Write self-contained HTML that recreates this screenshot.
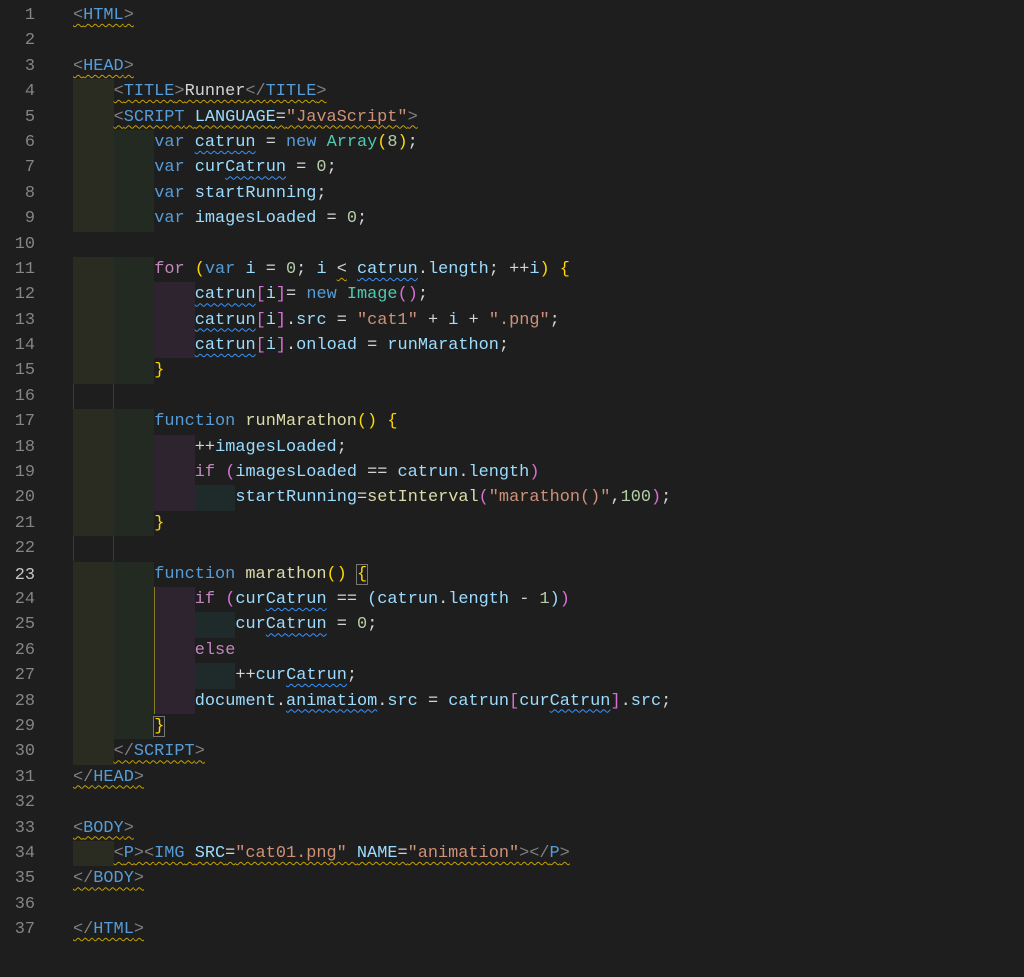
<!DOCTYPE html>
<html><head><meta charset="utf-8"><style>
html,body{margin:0;padding:0;background:#1e1e1e;width:1024px;height:977px;overflow:hidden}
#ed{position:absolute;left:0;top:3px;font-family:"Liberation Mono",monospace;font-size:16.9px;color:#d4d4d4}
.l{position:relative;height:25.4px;line-height:25.4px;white-space:pre}
.ln{position:absolute;left:0;width:35px;text-align:right;color:#858585}
.cd{position:absolute;left:73px;top:0}
.cur{border-top:1px solid #2c2c2c;border-bottom:1px solid #2c2c2c;box-sizing:border-box}
.cur .ln{color:#c6c6c6}
.i{display:inline-block;width:40.6px;height:25.4px;vertical-align:top}
.i1{background:#2b2c21}.i2{background:#232a22}.i3{background:#2d2430}.i4{background:#1f2a2a}
.t{color:#808080}.n{color:#569cd6}.a{color:#9cdcfe}.s{color:#ce9178}.k{color:#569cd6}.v{color:#9cdcfe}
.c{color:#c586c0}.f{color:#dcdcaa}.y{color:#ffd700}.p{color:#da70d6}.num{color:#b5cea8}.cl{color:#4ec9b0}
.w{text-decoration:underline wavy #c5a300;text-decoration-thickness:1px;text-underline-offset:4px}
.b{text-decoration:underline wavy #3794ff;text-decoration-thickness:1px;text-underline-offset:4px}
.g{position:absolute;width:1px;background:#3a3a3a}
.bx{outline:1px solid #777;}
</style></head><body>
<div class="g" style="left:73px;top:257px;height:25px"></div>
<div class="g" style="left:113px;top:257px;height:25px"></div>
<div class="g" style="left:73px;top:384px;height:25px"></div>
<div class="g" style="left:113px;top:384px;height:25px"></div>
<div class="g" style="left:73px;top:536px;height:25px"></div>
<div class="g" style="left:113px;top:536px;height:25px"></div>
<div id="ed">
<div class="l"><span class="ln">1</span><span class="cd"><span class="w"><span class="t">&lt;</span><span class="n">HTML</span><span class="t">&gt;</span></span></span></div>
<div class="l"><span class="ln">2</span></div>
<div class="l"><span class="ln">3</span><span class="cd"><span class="w"><span class="t">&lt;</span><span class="n">HEAD</span><span class="t">&gt;</span></span></span></div>
<div class="l"><span class="ln">4</span><span class="cd"><span class="i i1"></span><span class="w"><span class="t">&lt;</span><span class="n">TITLE</span><span class="t">&gt;</span>Runner<span class="t">&lt;/</span><span class="n">TITLE</span><span class="t">&gt;</span></span></span></div>
<div class="l"><span class="ln">5</span><span class="cd"><span class="i i1"></span><span class="w"><span class="t">&lt;</span><span class="n">SCRIPT</span> <span class="a">LANGUAGE</span>=<span class="s">"JavaScript"</span><span class="t">&gt;</span></span></span></div>
<div class="l"><span class="ln">6</span><span class="cd"><span class="i i1"></span><span class="i i2"></span><span class="k">var</span> <span class="v b">catrun</span> = <span class="k">new</span> <span class="cl">Array</span><span class="y">(</span><span class="num">8</span><span class="y">)</span>;</span></div>
<div class="l"><span class="ln">7</span><span class="cd"><span class="i i1"></span><span class="i i2"></span><span class="k">var</span> <span class="v">cur<span class="b">Catrun</span></span> = <span class="num">0</span>;</span></div>
<div class="l"><span class="ln">8</span><span class="cd"><span class="i i1"></span><span class="i i2"></span><span class="k">var</span> <span class="v">startRunning</span>;</span></div>
<div class="l"><span class="ln">9</span><span class="cd"><span class="i i1"></span><span class="i i2"></span><span class="k">var</span> <span class="v">imagesLoaded</span> = <span class="num">0</span>;</span></div>
<div class="l"><span class="ln">10</span></div>
<div class="l"><span class="ln">11</span><span class="cd"><span class="i i1"></span><span class="i i2"></span><span class="c">for</span> <span class="y">(</span><span class="k">var</span> <span class="v">i</span> = <span class="num">0</span>; <span class="v">i</span> <span class="w">&lt;</span> <span class="v b">catrun</span>.<span class="v">length</span>; ++<span class="v">i</span><span class="y">)</span> <span class="y">{</span></span></div>
<div class="l"><span class="ln">12</span><span class="cd"><span class="i i1"></span><span class="i i2"></span><span class="i i3"></span><span class="v b">catrun</span><span class="p">[</span><span class="v">i</span><span class="p">]</span>= <span class="k">new</span> <span class="cl">Image</span><span class="p">()</span>;</span></div>
<div class="l"><span class="ln">13</span><span class="cd"><span class="i i1"></span><span class="i i2"></span><span class="i i3"></span><span class="v b">catrun</span><span class="p">[</span><span class="v">i</span><span class="p">]</span>.<span class="v">src</span> = <span class="s">"cat1"</span> + <span class="v">i</span> + <span class="s">".png"</span>;</span></div>
<div class="l"><span class="ln">14</span><span class="cd"><span class="i i1"></span><span class="i i2"></span><span class="i i3"></span><span class="v b">catrun</span><span class="p">[</span><span class="v">i</span><span class="p">]</span>.<span class="v">onload</span> = <span class="v">runMarathon</span>;</span></div>
<div class="l"><span class="ln">15</span><span class="cd"><span class="i i1"></span><span class="i i2"></span><span class="y">}</span></span></div>
<div class="l"><span class="ln">16</span></div>
<div class="l"><span class="ln">17</span><span class="cd"><span class="i i1"></span><span class="i i2"></span><span class="k">function</span> <span class="f">runMarathon</span><span class="y">()</span> <span class="y">{</span></span></div>
<div class="l"><span class="ln">18</span><span class="cd"><span class="i i1"></span><span class="i i2"></span><span class="i i3"></span>++<span class="v">imagesLoaded</span>;</span></div>
<div class="l"><span class="ln">19</span><span class="cd"><span class="i i1"></span><span class="i i2"></span><span class="i i3"></span><span class="c">if</span> <span class="p">(</span><span class="v">imagesLoaded</span> == <span class="v">catrun</span>.<span class="v">length</span><span class="p">)</span></span></div>
<div class="l"><span class="ln">20</span><span class="cd"><span class="i i1"></span><span class="i i2"></span><span class="i i3"></span><span class="i i4"></span><span class="v">startRunning</span>=<span class="f">setInterval</span><span class="p">(</span><span class="s">"marathon()"</span>,<span class="num">100</span><span class="p">)</span>;</span></div>
<div class="l"><span class="ln">21</span><span class="cd"><span class="i i1"></span><span class="i i2"></span><span class="y">}</span></span></div>
<div class="l"><span class="ln">22</span></div>
<div class="l cur"><span class="ln">23</span><span class="cd" style="top:-1px"><span class="i i1"></span><span class="i i2"></span><span class="k">function</span> <span class="f">marathon</span><span class="y">()</span> <span class="y bx">{</span></span></div>
<div class="l"><span class="ln">24</span><span class="cd"><span class="i i1"></span><span class="i i2"></span><span class="i i3" style="box-shadow:inset 1px 0 #8a7a20"></span><span class="c">if</span> <span class="p">(</span><span class="v">cur<span class="b">Catrun</span></span> == <span class="v" style="color:#9cdcfe">(</span><span class="v">catrun</span>.<span class="v">length</span> - <span class="num">1</span><span class="v">)</span><span class="p">)</span></span></div>
<div class="l"><span class="ln">25</span><span class="cd"><span class="i i1"></span><span class="i i2"></span><span class="i i3" style="box-shadow:inset 1px 0 #8a7a20"></span><span class="i i4"></span><span class="v">cur<span class="b">Catrun</span></span> = <span class="num">0</span>;</span></div>
<div class="l"><span class="ln">26</span><span class="cd"><span class="i i1"></span><span class="i i2"></span><span class="i i3" style="box-shadow:inset 1px 0 #8a7a20"></span><span class="c">else</span></span></div>
<div class="l"><span class="ln">27</span><span class="cd"><span class="i i1"></span><span class="i i2"></span><span class="i i3" style="box-shadow:inset 1px 0 #8a7a20"></span><span class="i i4"></span>++<span class="v">cur<span class="b">Catrun</span></span>;</span></div>
<div class="l"><span class="ln">28</span><span class="cd"><span class="i i1"></span><span class="i i2"></span><span class="i i3" style="box-shadow:inset 1px 0 #8a7a20"></span><span class="v">document</span>.<span class="v b">animatiom</span>.<span class="v">src</span> = <span class="v">catrun</span><span class="p">[</span><span class="v">cur<span class="b">Catrun</span></span><span class="p">]</span>.<span class="v">src</span>;</span></div>
<div class="l"><span class="ln">29</span><span class="cd"><span class="i i1"></span><span class="i i2"></span><span class="y bx">}</span></span></div>
<div class="l"><span class="ln">30</span><span class="cd"><span class="i i1"></span><span class="w"><span class="t">&lt;/</span><span class="n">SCRIPT</span><span class="t">&gt;</span></span></span></div>
<div class="l"><span class="ln">31</span><span class="cd"><span class="w"><span class="t">&lt;/</span><span class="n">HEAD</span><span class="t">&gt;</span></span></span></div>
<div class="l"><span class="ln">32</span></div>
<div class="l"><span class="ln">33</span><span class="cd"><span class="w"><span class="t">&lt;</span><span class="n">BODY</span><span class="t">&gt;</span></span></span></div>
<div class="l"><span class="ln">34</span><span class="cd"><span class="i i1"></span><span class="w"><span class="t">&lt;</span><span class="n">P</span><span class="t">&gt;&lt;</span><span class="n">IMG</span> <span class="a">SRC</span>=<span class="s">"cat01.png"</span> <span class="a">NAME</span>=<span class="s">"animation"</span><span class="t">&gt;&lt;/</span><span class="n">P</span><span class="t">&gt;</span></span></span></div>
<div class="l"><span class="ln">35</span><span class="cd"><span class="w"><span class="t">&lt;/</span><span class="n">BODY</span><span class="t">&gt;</span></span></span></div>
<div class="l"><span class="ln">36</span></div>
<div class="l"><span class="ln">37</span><span class="cd"><span class="w"><span class="t">&lt;/</span><span class="n">HTML</span><span class="t">&gt;</span></span></span></div>
</div>
</body></html>
